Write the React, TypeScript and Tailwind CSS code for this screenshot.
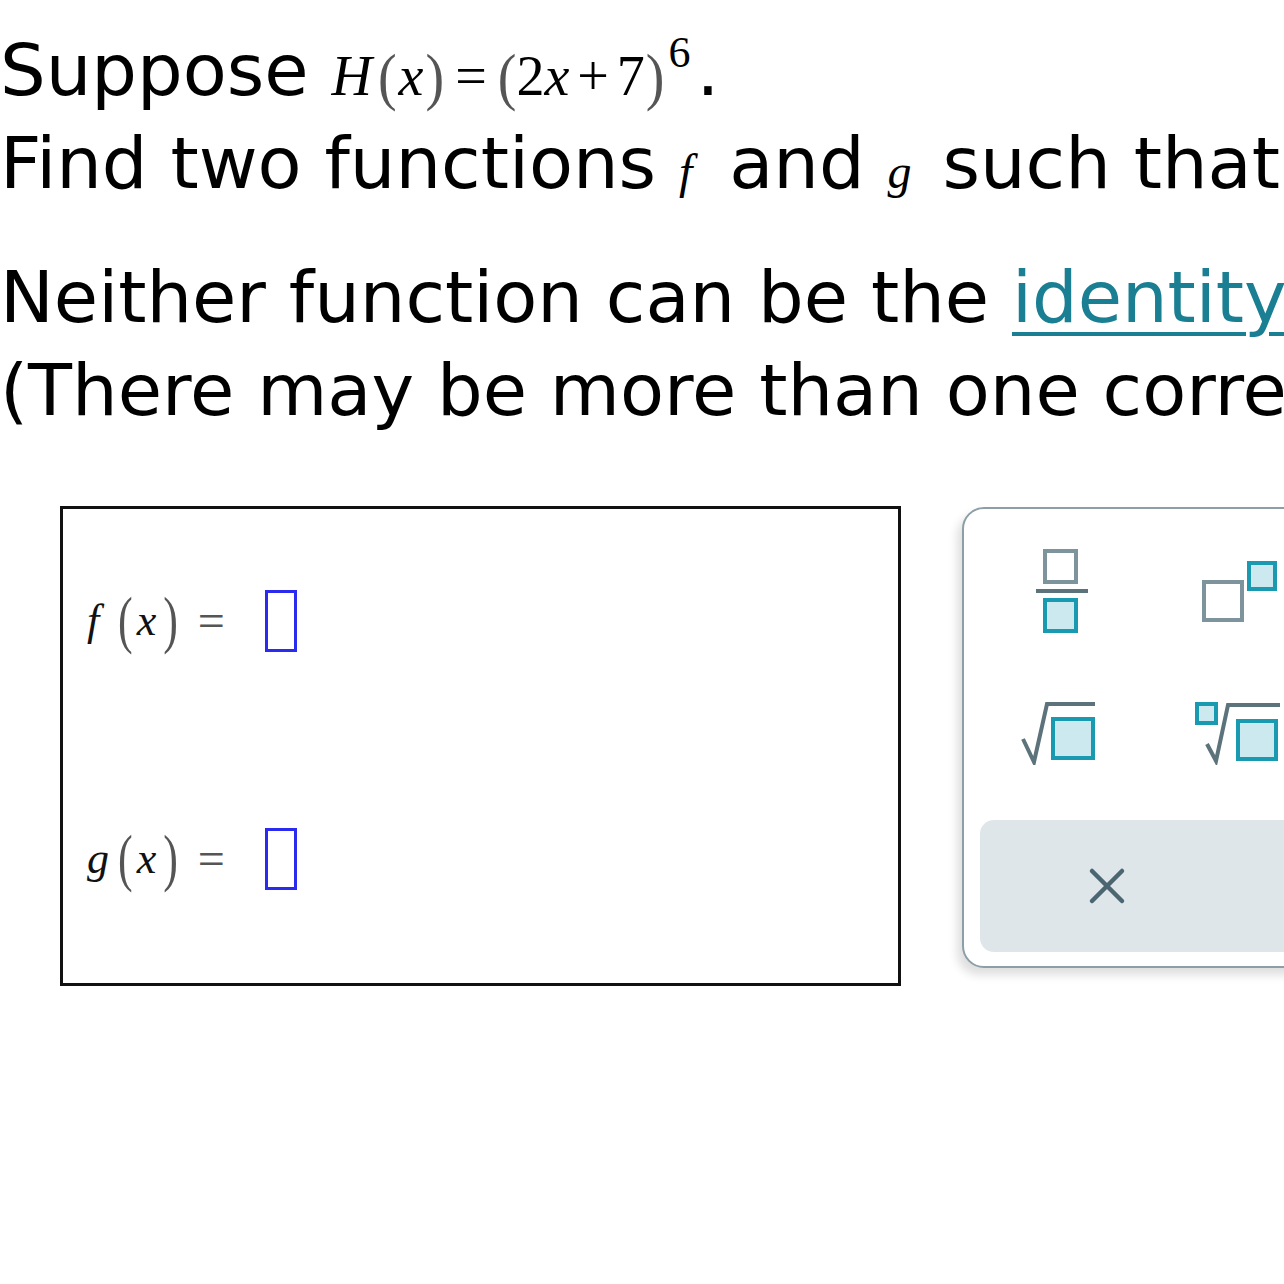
import React from "react";

// серые и бирюзовые цвета клавиатуры
const GREY = "#7d949c";
const DARK = "#5c737b";
const TEAL = "#1a9ab0";
const FILL = "#cde9f0";

function Paren({ ch, className = "" }: { ch: string; className?: string }) {
  return (
    <span className={"inline-block not-italic text-[#555] origin-center " + className}>
      {ch}
    </span>
  );
}

function FractionIcon() {
  return (
    <svg width="56" height="86" viewBox="0 0 56 86">
      <rect x="11" y="2" width="31" height="31" fill="none" stroke={GREY} strokeWidth="4" />
      <line x1="2" y1="42" x2="54" y2="42" stroke={DARK} strokeWidth="4" />
      <rect x="11" y="51" width="31" height="31" fill={FILL} stroke={TEAL} strokeWidth="4" />
    </svg>
  );
}

function PowerIcon() {
  return (
    <svg width="76" height="62" viewBox="0 0 76 62">
      <rect x="2" y="21" width="38" height="38" fill="none" stroke={GREY} strokeWidth="4" />
      <rect x="47" y="2" width="26" height="26" fill={FILL} stroke={TEAL} strokeWidth="4" />
    </svg>
  );
}

function SqrtIcon() {
  return (
    <svg width="76" height="64" viewBox="0 0 76 64" className="-ml-[7px]">
      <path d="M2 38 L13 61 L26 3 L74 3" fill="none" stroke={DARK} strokeWidth="4" strokeLinejoin="miter" />
      <rect x="32" y="18" width="40" height="39" fill={FILL} stroke={TEAL} strokeWidth="4" />
    </svg>
  );
}

function RootIcon() {
  return (
    <svg width="88" height="64" viewBox="0 0 88 64" className="-ml-[4px]">
      <rect x="3" y="3" width="19" height="19" fill={FILL} stroke={TEAL} strokeWidth="4" />
      <path d="M13 43 L22 60 L34 4 L86 4" fill="none" stroke={DARK} strokeWidth="4" strokeLinejoin="miter" />
      <rect x="44" y="20" width="38" height="38" fill={FILL} stroke={TEAL} strokeWidth="4" />
    </svg>
  );
}

function AnswerRow({ name }: { name: string }) {
  return (
    <div className="flex items-center h-[62px] font-['Liberation_Serif',serif] italic text-[44px] leading-none text-[#111]">
      <span className="w-[31px]">{name}</span>
      <Paren ch="(" className="text-[44px] scale-y-[1.45]" />
      <span className="ml-[4px] mr-[7px]">x</span>
      <Paren ch=")" className="text-[44px] scale-y-[1.45]" />
      <span className="not-italic text-[48px] text-[#555] ml-[20px]">=</span>
      <span className="ml-[40px] w-[32px] h-[62px] border-[3px] border-[#2b2bf0]" />
    </div>
  );
}

export default function App() {
  return (
    <div className="w-[1284px] h-[1284px] overflow-hidden bg-white text-black font-['DejaVu_Sans','Verdana',sans-serif]">
      <div className="pt-[24px] text-[72px] leading-[93px] whitespace-nowrap">
        <p>
          Suppose{" "}
          <span className="font-['Liberation_Serif',serif] italic text-[56px] leading-none">
            H
            <Paren ch="(" className="ml-[6px] scale-y-[1.15]" />
            <span className="mx-[2px]">x</span>
            <Paren ch=")" className="scale-y-[1.15]" />
            <span className="not-italic mx-[11px]">=</span>
            <Paren ch="(" className="scale-y-[1.15]" />
            <span className="not-italic">2</span>
            x
            <span className="not-italic mx-[8px]">+</span>
            <span className="not-italic">7</span>
            <Paren ch=")" className="ml-[1px] scale-y-[1.15]" />
            <span className="not-italic relative -top-[28px] text-[44px] ml-[4px]">6</span>
          </span>
          <span className="ml-[6px]">.</span>
        </p>
        <p>
          Find two functions{" "}
          <span className="font-['Liberation_Serif',serif] italic text-[48px] leading-none mr-[14px]">f</span> and{" "}
          <span className="font-['Liberation_Serif',serif] italic text-[48px] leading-none mr-[8px]">g</span> such that{" "}
          <span className="font-['Liberation_Serif',serif] italic text-[56px] leading-none">
            H(x) = (f ∘ g)(x)
          </span>
          .
        </p>
        <p className="mt-[41px]">
          Neither function can be the{" "}
          <a className="text-[#1a7f93] underline decoration-[4px] underline-offset-[10px]">
            identity function
          </a>
          .
        </p>
        <p>(There may be more than one correct answer.)</p>
      </div>

      <div className="flex items-start mt-[69px]">
        <div className="ml-[60px] w-[841px] h-[480px] border-[3px] border-[#111] shrink-0 pl-[24px] pt-[81px] flex flex-col gap-[176px]">
          <AnswerRow name="f" />
          <AnswerRow name="g" />
        </div>

        <div className="ml-[61px] mt-[1px] w-[400px] h-[461px] shrink-0 rounded-[22px] border-2 border-[#8c9fa7] bg-white shadow-[-5px_7px_10px_rgba(0,0,0,0.13)] pl-[9px] pt-[12px] flex flex-col">
          <div className="grid grid-cols-[178px_178px] grid-rows-[141px_141px]">
            <div className="flex items-center justify-center">
              <FractionIcon />
            </div>
            <div className="flex items-center justify-center">
              <PowerIcon />
            </div>
            <div className="flex items-center justify-center">
              <SqrtIcon />
            </div>
            <div className="flex items-center justify-center">
              <RootIcon />
            </div>
          </div>
          <div className="mt-[17px] ml-[7px] w-[400px] h-[132px] rounded-[14px] bg-[#dfe6e9] flex items-center pl-[108px]">
            <svg width="38" height="38" viewBox="0 0 38 38">
              <path d="M4 4 L34 34 M34 4 L4 34" stroke="#4c6671" strokeWidth="4.5" strokeLinecap="round" />
            </svg>
          </div>
        </div>
      </div>
    </div>
  );
}
